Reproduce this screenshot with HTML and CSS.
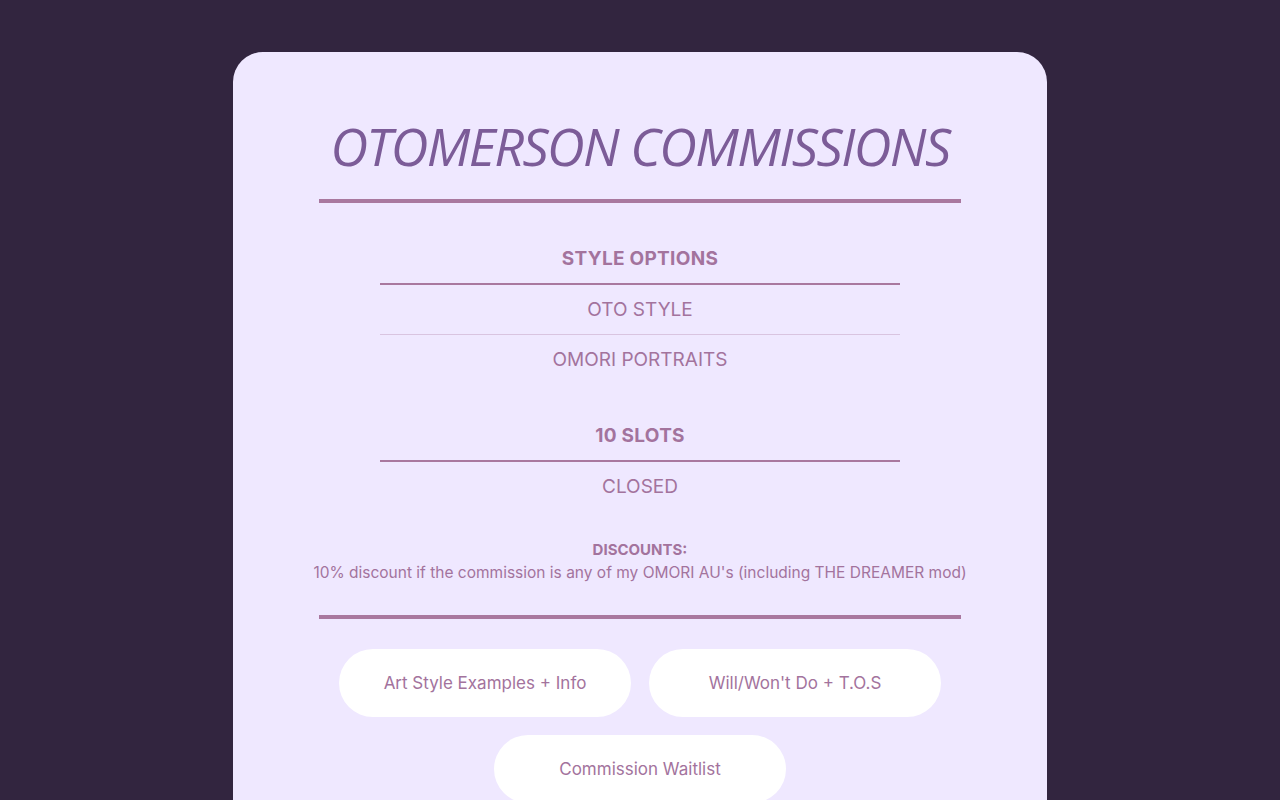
FILE: index.html
```html
<!DOCTYPE html>
<html lang="en">
<head>
    <meta charset="UTF-8">
    <meta name="viewport" content="width=device-width, initial-scale=1.0">
    <title>Otomerson Commissions</title>
    <link rel="stylesheet" href="styles.css">
</head>
<body>
<div class="card">
    <h1>OTOMERSON COMMISSIONS</h1>
    <hr class="thick">

    <div class="info">
        <div class="head">STYLE OPTIONS</div>
        <div class="row">OTO STYLE</div>
        <div class="row">OMORI PORTRAITS</div>
    </div>

    <div class="info">
        <div class="head">10 SLOTS</div>
        <div class="row">CLOSED</div>
    </div>

    <div class="discounts">
        <b>DISCOUNTS:</b>
        <p>10% discount if the commission is any of my OMORI AU's (including THE DREAMER mod)</p>
    </div>

    <hr class="thick">

    <div class="links">
        <a href="#">Art Style Examples + Info</a>
        <a href="#">Will/Won't Do + T.O.S</a>
        <a href="#">Commission Waitlist</a>
    </div>
</div>
</body>
</html>
```

FILE: styles.css
```css
body {
    margin: 0;
    background-color: #32253f;
    font-family: "Inter", "Lato", sans-serif;
    color: #a3739d;
}

.card {
    width: 814px;
    margin: 52px auto 0;
    background-color: #efe8ff;
    border-radius: 30px;
    padding: 60px 0 40px;
    box-sizing: border-box;
    display: flex;
    flex-direction: column;
    align-items: center;
}

h1 {
    margin: 0;
    font-family: "Open Sans", sans-serif;
    font-style: italic;
    font-weight: 400;
    font-size: 52px;
    line-height: 68px;
    letter-spacing: -1.5px;
    color: #7c5c98;
}

hr.thick {
    width: 642px;
    height: 4px;
    border: none;
    margin: 19px 0 0;
    background-color: #a9789f;
}

.info {
    width: 520px;
    margin-top: 32px;
    display: flex;
    flex-direction: column;
    text-align: center;
}

.info + .info {
    margin-top: 27px;
}

.info .head {
    height: 48px;
    line-height: 48px;
    font-size: 19px;
    font-weight: 700;
    letter-spacing: 0.3px;
    border-bottom: 2px solid #a9789f;
}

.info .row {
    height: 49px;
    line-height: 49px;
    font-size: 19px;
    border-bottom: 1px solid #d9c4e0;
}

.info .row:last-child {
    border-bottom-color: transparent;
}

.discounts {
    margin-top: 27px;
    text-align: center;
}

.discounts b {
    display: block;
    font-size: 15px;
    line-height: 22px;
}

.discounts p {
    margin: 0;
    font-size: 15.5px;
    line-height: 24px;
}

.discounts + hr.thick {
    margin-top: 30px;
}

.links {
    margin-top: 30px;
    width: 620px;
    display: flex;
    flex-wrap: wrap;
    justify-content: center;
    gap: 18px;
}

.links a {
    width: 292px;
    height: 68px;
    border-radius: 34px;
    background-color: #fff;
    color: #a3739d;
    text-decoration: none;
    font-size: 17px;
    display: flex;
    align-items: center;
    justify-content: center;
}
```
